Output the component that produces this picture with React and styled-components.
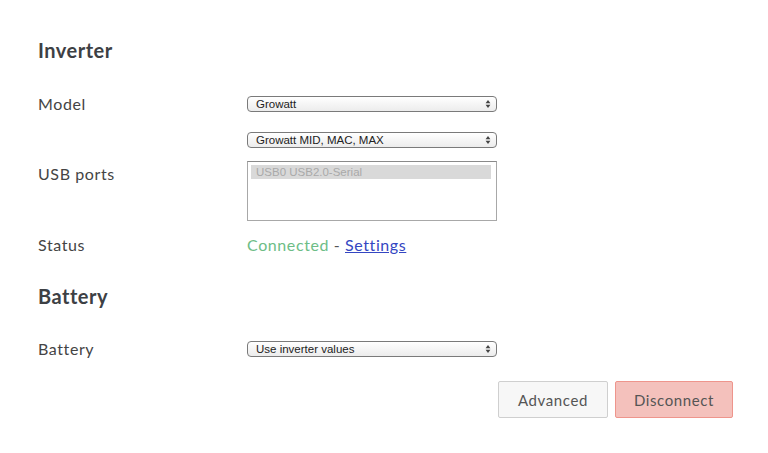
import React from 'react';
import styled, { createGlobalStyle } from 'styled-components';

const GlobalStyle = createGlobalStyle`
  html, body {
    margin: 0;
    padding: 0;
    background: #fff;
  }
  body {
    font-family: Lato, "Open Sans", sans-serif;
    color: #444;
  }
`;

const Page = styled.div`
  width: 768px;
  height: 453px;
  box-sizing: border-box;
  padding: 37px 35px 0 38px;
`;

const Heading = styled.h2`
  margin: 0 0 ${(props) => props.gap || 28}px;
  font-size: 20px;
  line-height: 26px;
  font-weight: 700;
  color: #3d4044;
  letter-spacing: 0.5px;
`;

const Row = styled.div`
  display: grid;
  grid-template-columns: 209px 250px;
  align-items: ${(props) => (props.top ? 'start' : 'center')};
  height: ${(props) => (props.top ? 'auto' : '26px')};
  margin-bottom: ${(props) => props.gap || 0}px;
`;

const Label = styled.div`
  font-size: 16px;
  line-height: 26px;
  color: #444;
  letter-spacing: 0.6px;
`;

const SelectBox = styled.div`
  position: relative;
  width: 250px;
  height: 16px;
  box-sizing: border-box;
  padding: 0 20px 0 8px;
  border: 1px solid #7a7a7a;
  border-radius: 4px;
  background: linear-gradient(#ffffff, #ececec);
  font-family: "Liberation Sans", Arial, sans-serif;
  font-size: 11.5px;
  line-height: 14px;
  color: #222;
  white-space: nowrap;
  cursor: default;
`;

const Arrows = styled.svg`
  position: absolute;
  right: 5px;
  top: 2px;
`;

const ListBox = styled.div`
  width: 250px;
  height: 60px;
  box-sizing: border-box;
  border: 1px solid #a8a8a8;
  border-top-color: #8a8a8a;
  padding: 3px 5px 0 3px;
  background: #fff;
`;

const Option = styled.div`
  height: 14px;
  padding-left: 5px;
  background: #d9d9d9;
  font-family: "Liberation Sans", Arial, sans-serif;
  font-size: 11.5px;
  line-height: 14px;
  color: #a9a9a9;
`;

const Status = styled.div`
  font-size: 16px;
  line-height: 26px;
  color: #555;
  letter-spacing: 0.6px;
`;

const Connected = styled.span`
  color: #6dbd86;
`;

const Link = styled.a`
  color: #3446c2;
  text-decoration: underline;
`;

const Actions = styled.div`
  display: flex;
  justify-content: flex-end;
  gap: 7px;
`;

const Button = styled.button`
  height: 37px;
  box-sizing: border-box;
  padding: 0;
  width: ${(props) => (props.danger ? 118 : 110)}px;
  border: 1px solid ${(props) => (props.danger ? '#ee958c' : '#cfcfcf')};
  border-radius: 2px;
  background: ${(props) => (props.danger ? '#f4c1bc' : '#f7f7f7')};
  font-family: Lato, "Open Sans", sans-serif;
  font-size: 15px;
  color: #555;
  letter-spacing: 0.6px;
`;

const Select = ({ value }) => (
  <SelectBox role="combobox" aria-expanded="false">
    {value}
    <Arrows width="6" height="10" viewBox="0 0 6 10">
      <path d="M3 1 L5.4 4.2 H0.6 Z" fill="#444" />
      <path d="M3 9 L5.4 5.8 H0.6 Z" fill="#444" />
    </Arrows>
  </SelectBox>
);

const App = () => (
  <>
    <GlobalStyle />
    <Page>
      <Heading>Inverter</Heading>
      <Row gap={10}>
        <Label>Model</Label>
        <Select value="Growatt" />
      </Row>
      <Row gap={8}>
        <span />
        <Select value="Growatt MID, MAC, MAX" />
      </Row>
      <Row top gap={11}>
        <Label>USB ports</Label>
        <ListBox>
          <Option>USB0 USB2.0-Serial</Option>
        </ListBox>
      </Row>
      <Row gap={25}>
        <Label>Status</Label>
        <Status>
          <Connected>Connected</Connected> - <Link href="#">Settings</Link>
        </Status>
      </Row>
      <Heading gap={27}>Battery</Heading>
      <Row gap={19}>
        <Label>Battery</Label>
        <Select value="Use inverter values" />
      </Row>
      <Actions>
        <Button>Advanced</Button>
        <Button danger>Disconnect</Button>
      </Actions>
    </Page>
  </>
);

export default App;
